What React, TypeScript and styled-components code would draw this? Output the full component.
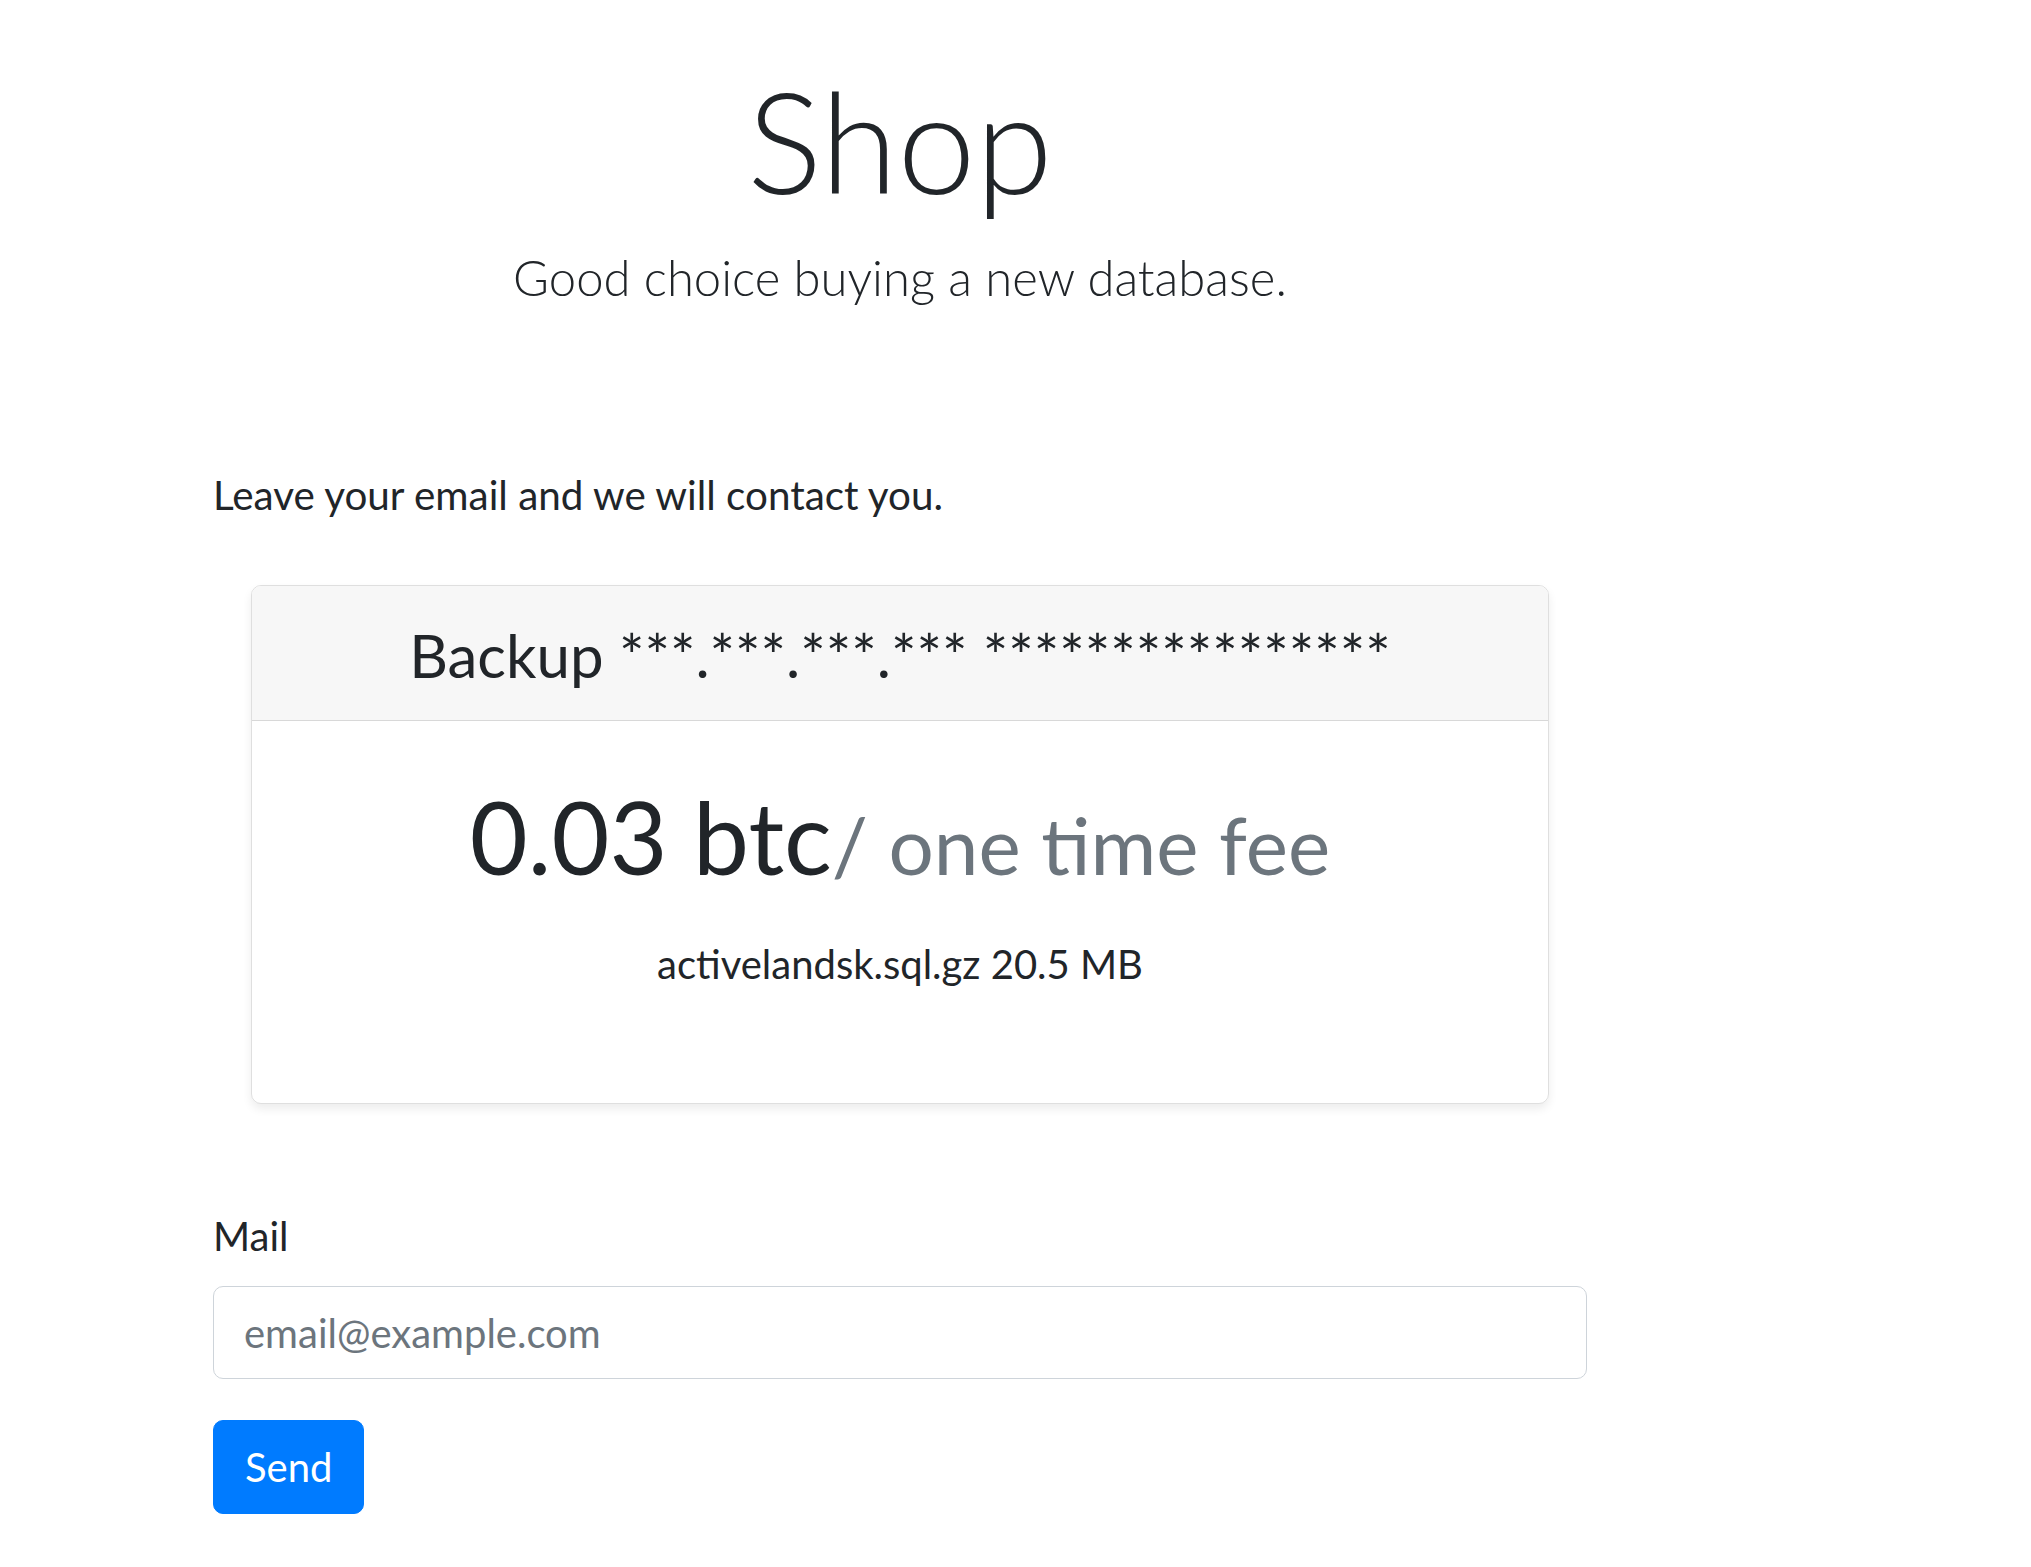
import React from 'react';
import styled, { createGlobalStyle } from 'styled-components';

const GlobalStyle = createGlobalStyle`
  html, body {
    margin: 0;
    padding: 0;
    background: #fff;
  }
  body {
    font-family: Lato, "Open Sans", sans-serif;
    font-size: 40px;
    line-height: 1.5;
    color: #212529;
  }
  * {
    box-sizing: border-box;
  }
`;

const Container = styled.div`
  width: 1587px;
  padding-left: 213px;
  padding-bottom: 56px;
`;

const Header = styled.header`
  text-align: center;
  padding-top: 56px;
`;

const Title = styled.h1`
  margin: 0 0 17px;
  font-size: 140px;
  font-weight: 300;
  line-height: 1.2;
`;

const Lead = styled.p`
  margin: 0;
  font-size: 49px;
  font-weight: 300;
  line-height: 1.5;
`;

const Intro = styled.p`
  margin: 150px 0 60px;
  font-size: 40.4px;
`;

const Card = styled.div`
  margin: 0 38px;
  border: 1px solid rgba(0, 0, 0, 0.125);
  border-radius: 10px;
  box-shadow: 0 5px 10px rgba(0, 0, 0, 0.075);
  overflow: hidden;
  text-align: center;
`;

const CardHeader = styled.div`
  background: #f7f7f7;
  border-bottom: 1px solid rgba(0, 0, 0, 0.125);
  padding: 33px 50px 29px;
`;

const CardTitle = styled.h4`
  margin: 0;
  font-size: 60px;
  font-weight: 400;
  line-height: 1.2;
`;

const CardBody = styled.div`
  padding: 55px 50px 109px;
`;

const Price = styled.h1`
  margin: 0 0 38px;
  font-size: 100px;
  font-weight: 400;
  line-height: 1.2;
`;

const Muted = styled.small`
  font-size: 80%;
  color: #6c757d;
`;

const FileInfo = styled.div`
  line-height: 1.5;
`;

const Form = styled.form`
  margin-top: 102px;
`;

const Label = styled.label`
  display: block;
  margin-bottom: 20px;
`;

const Input = styled.input`
  display: block;
  width: 100%;
  height: 93px;
  padding: 15px 30px;
  font-family: inherit;
  font-size: 40px;
  line-height: 1.5;
  color: #495057;
  background: #fff;
  border: 1px solid #ced4da;
  border-radius: 10px;
  outline: none;

  &::placeholder {
    color: #6c757d;
    opacity: 1;
  }
`;

const Button = styled.button`
  display: inline-block;
  margin-top: 41px;
  height: 94px;
  padding: 15px 31px;
  font-family: inherit;
  font-size: 40px;
  line-height: 1.5;
  color: #fff;
  background: #007bff;
  border: 1px solid #007bff;
  border-radius: 10px;
  cursor: pointer;
`;

export default function App() {
  return (
    <>
      <GlobalStyle />
      <Container>
        <Header>
          <Title>Shop</Title>
          <Lead>Good choice buying a new database.</Lead>
        </Header>
        <Intro>Leave your email and we will contact you.</Intro>
        <Card>
          <CardHeader>
            <CardTitle>Backup ***.***.***.*** ****************</CardTitle>
          </CardHeader>
          <CardBody>
            <Price>
              0.03 btc<Muted>/ one time fee</Muted>
            </Price>
            <FileInfo>activelandsk.sql.gz 20.5 MB</FileInfo>
          </CardBody>
        </Card>
        <Form onSubmit={(e) => e.preventDefault()}>
          <Label htmlFor="mail">Mail</Label>
          <Input id="mail" type="email" placeholder="email@example.com" />
          <Button type="submit">Send</Button>
        </Form>
      </Container>
    </>
  );
}
